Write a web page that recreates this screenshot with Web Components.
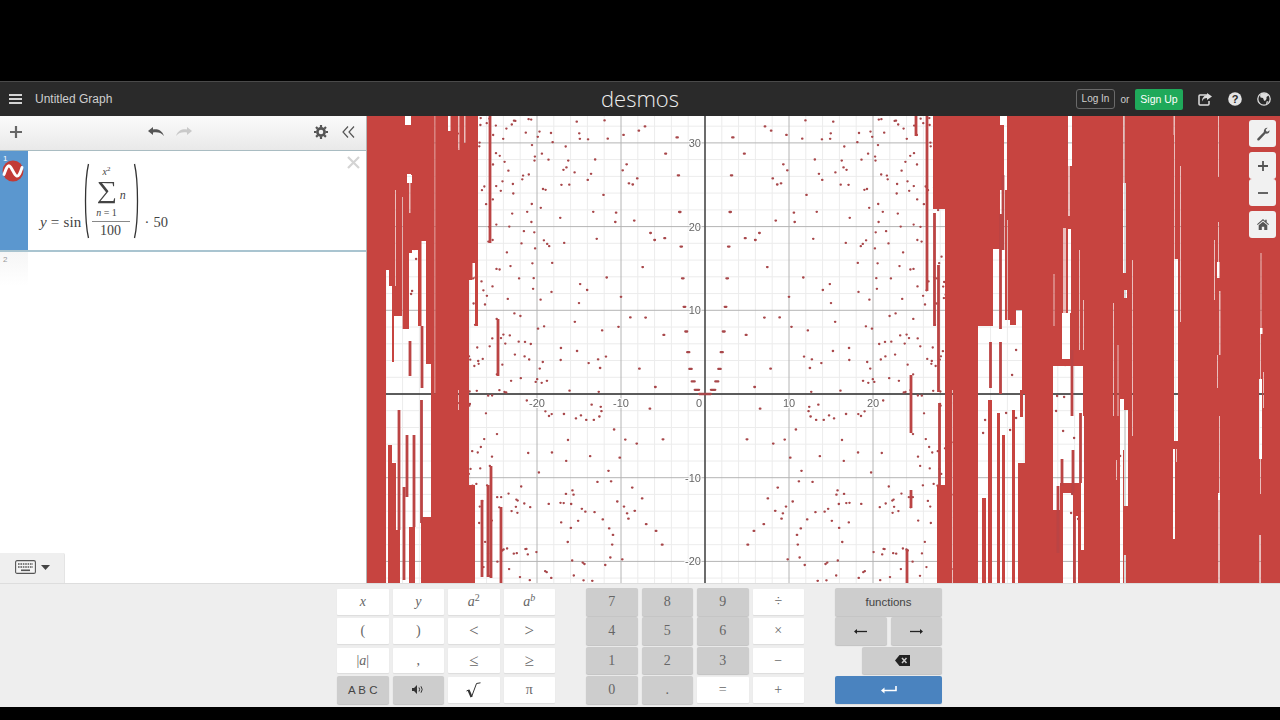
<!DOCTYPE html>
<html lang="en">
<head>
<meta charset="utf-8">
<title>Desmos | Untitled Graph</title>
<style>
  html, body { margin: 0; background: #000; height: 100%; overflow: hidden; }
</style>
</head>
<body>
<dcg-app></dcg-app>

<script>
const icons = {
  menu: '<svg width="13" height="10" viewBox="0 0 13 10"><path d="M0 1h13M0 5h13M0 9h13" stroke="#d4d4d4" stroke-width="1.800"/></svg>',
  plus: '<svg width="12" height="12" viewBox="0 0 12 12"><path d="M6 0v12M0 6h12" stroke="#666" stroke-width="2.200"/></svg>',
  undo: '<svg width="16" height="11" viewBox="0 0 16 11"><path d="M0 5l5-4v2.400c5-.6 9 1 11 6.600-3-3.400-6-4.200-11-3.600V9z" fill="currentColor"/></svg>',
  redo: '<svg width="16" height="11" viewBox="0 0 16 11"><path d="M16 5l-5-4v2.400C6 2.800 2 4.400 0 10c3-3.400 6-4.200 11-3.600V9z" fill="currentColor"/></svg>',
  gear: '<svg width="14" height="14" viewBox="0 0 14 14"><circle cx="7" cy="7" r="3.600" fill="none" stroke="#555" stroke-width="2.600"/><path d="M7 0v14M0 7h14M2 2l10 10M12 2L2 12" stroke="#555" stroke-width="2.200" stroke-dasharray="2.400 9.200 2.400"/></svg>',
  collapse: '<svg width="13" height="12" viewBox="0 0 13 12"><path d="M6 .5L1 6l5 5.500M12 .5L7 6l5 5.500" fill="none" stroke="#555" stroke-width="1.200"/></svg>',
  share: '<svg width="14" height="13" viewBox="0 0 14 13"><path d="M9 2H2q-1 0-1 1v8q0 1 1 1h8q1 0 1-1V8" fill="none" stroke="#ddd" stroke-width="1.500"/><path d="M9 0l5 3.500L9 7V5C6.500 5 5 6 4 8.500 4 5 6 2.500 9 2z" fill="#ddd"/></svg>',
  help: '<svg width="14" height="14" viewBox="0 0 14 14"><circle cx="7" cy="7" r="6.800" fill="#e4e4e4"/><text x="7" y="10.800" text-anchor="middle" font-family="Liberation Sans, sans-serif" font-weight="700" font-size="11" fill="#2a2a2a">?</text></svg>',
  globe: '<svg width="14" height="14" viewBox="0 0 14 14"><circle cx="7" cy="7" r="6.200" fill="#2a2a2a" stroke="#ddd" stroke-width="1.300"/><path d="M5 1l5 .5 1.500 2-2 1.500L9.500 7l-1.500 2-1-.5L6 6 3.500 5.500 3 3.500zM9.500 9.500l2-.5-1.500 3-1 .5z" fill="#ddd"/></svg>',
  wrench: '<svg width="14" height="14" viewBox="0 0 14 14"><path d="M13.500 3.200c.3 2.200-1.700 4-3.900 3.400L3.300 13.300c-1.100 1-2.900-.7-1.800-1.900l6.400-6.500C7.400 2.600 9.300.5 11.600.7L9.700 2.800l.5 1.500 1.500.4z" fill="#555"/></svg>',
  zoomIn: '<svg width="10" height="10" viewBox="0 0 10 10"><path d="M5 0v10M0 5h10" stroke="#555" stroke-width="1.800"/></svg>',
  zoomOut: '<svg width="10" height="10" viewBox="0 0 10 10"><path d="M0 5h10" stroke="#555" stroke-width="1.800"/></svg>',
  home: '<svg width="12" height="11" viewBox="0 0 12 11"><path d="M6 0l2.200 1.900V.8h1.500v2.400L12 5.300l-.7.700L6 1.600.7 6 0 5.300zM6 2.800l4.300 3.500V11H7.200V7.800H4.800V11H1.700V6.300z" fill="#555"/></svg>',
  speaker: '<svg width="12" height="9" viewBox="0 0 12 9"><path d="M0 3h2l3-3v9L2 6H0z" fill="#333"/><path d="M7 2.500q1.300 2 0 4M9 1.300q2.400 3.200 0 6.400" fill="none" stroke="#333" stroke-width="1"/></svg>',
  sqrt: '<svg width="15" height="16" viewBox="0 0 15 16"><path d="M.5 9l2-1 3 7L10.500 1.500 14.500 .8" fill="none" stroke="#333" stroke-width="1"/><path d="M2.500 8l3 7" stroke="#333" stroke-width="2.200"/></svg>',
  left: '<svg width="13" height="7" viewBox="0 0 13 7"><path d="M13 3.500H1" stroke="#222" stroke-width="1.300"/><path d="M0 3.500L3 1v5z" fill="#222"/></svg>',
  right: '<svg width="13" height="7" viewBox="0 0 13 7"><path d="M0 3.500h12" stroke="#222" stroke-width="1.300"/><path d="M13 3.500L10 1v5z" fill="#222"/></svg>',
  back: '<svg width="15" height="11" viewBox="0 0 15 11"><path d="M0 5.500L4.500 0H15v11H4.500z" fill="#222"/><path d="M7 3l4.500 5M11.500 3L7 8" stroke="#ccc" stroke-width="1.500"/></svg>',
  enter: '<svg width="16" height="8" viewBox="0 0 16 8"><path d="M15 0v4.500H2" fill="none" stroke="#fff" stroke-width="1.600"/><path d="M0 4.500l3.500-3v6z" fill="#fff"/></svg>',
  keyboard: '<svg width="21" height="14" viewBox="0 0 21 14"><rect x=".6" y=".6" width="19.800" height="12.800" rx="1.500" fill="#f4f4f4" stroke="#555" stroke-width="1.100"/><path d="M3 4h15M3 7h15" stroke="#555" stroke-width="1.700" stroke-dasharray="1.600 .8"/><path d="M6 10.300h9" stroke="#555" stroke-width="1.600"/></svg>',
  caret: '<svg width="9" height="5" viewBox="0 0 9 5"><path d="M0 0h9L4.500 5z" fill="#444"/></svg>',
  wave: '<svg width="22" height="22" viewBox="0 0 22 22"><circle cx="11" cy="11" r="10.500" fill="#c23b36"/><path d="M2 14.500C4 9 5.500 5 7.500 6c2.500 1.500 4.500 9 7 10 2.500 1 4-4 5.500-8.500" fill="none" stroke="#fff" stroke-width="2.900" stroke-linecap="round"/></svg>'
}

customElements.define('dcg-header', class extends HTMLElement {
  constructor () {
    super()
    this.attachShadow({ mode: 'open' }).innerHTML = `
<style>
:host {
  display: grid;
  grid-template-columns: 1fr auto 1fr;
  align-items: center;
  height: 35px;
  box-sizing: border-box;
  border-top: 1px solid #4a4a4a;
  background: #2a2a2a;
  color: #cfcfcf;
  font-family: "Liberation Sans", sans-serif;
}
.left, .right { display: flex; align-items: center; }
.left { padding-left: 9px; }
.left svg { display: block; }
.title { margin-left: 13px; font-size: 12px; }
.logo { font-family: "Open Sans", sans-serif; font-weight: 300; font-size: 22px; color: #eee; margin-top: -2px; }
.right { justify-content: flex-end; padding-right: 9px; font-size: 10px; }
.login { border: 1px solid #6a6a6a; border-radius: 3px; width: 37px; text-align: center; height: 18px; line-height: 18px; }
.or { width: 20px; text-align: center; }
.signup { background: #1fa95a; color: #fff; border-radius: 2px; width: 48px; height: 21px; line-height: 21px; text-align: center; font-size: 10.500px; }
.right svg { display: block; }
.share { margin-left: 15px; }
.help { margin-left: 16px; }
.globe { margin-left: 15px; }
</style>
<div class="left">${icons.menu}<span class="title">Untitled Graph</span></div>
<div class="logo">desmos</div>
<div class="right">
  <span class="login">Log In</span><span class="or">or</span><span class="signup">Sign Up</span>
  <span class="share">${icons.share}</span><span class="help">${icons.help}</span><span class="globe">${icons.globe}</span>
</div>`
  }
})

customElements.define('expr-toolbar', class extends HTMLElement {
  constructor () {
    super()
    this.attachShadow({ mode: 'open' }).innerHTML = `
<style>
:host {
  display: flex;
  align-items: center;
  height: 35px;
  box-sizing: border-box;
  padding: 0 11px 3px 10px;
  background: linear-gradient(#fbfbfb, #e9e9e9);
  border-bottom: 1px solid #a9bcc2;
}
svg { display: block; }
.mid { margin-left: 126px; display: flex; gap: 12px; width: 169px; color: #555; }
.mid span + span { color: #c9c9c9; }
.collapse { margin-left: 14px; }
</style>
<span>${icons.plus}</span>
<div class="mid"><span>${icons.undo}</span><span>${icons.redo}</span></div>
<span>${icons.gear}</span>
<span class="collapse">${icons.collapse}</span>`
  }
})

customElements.define('sum-fraction', class extends HTMLElement {
  constructor () {
    super()
    this.attachShadow({ mode: 'open' }).innerHTML = `
<style>
:host {
  display: inline-flex;
  align-items: flex-end;
  font-family: "Liberation Serif", serif;
  color: #444;
  font-size: 15px;
}
i { font-style: italic; }
.text { line-height: 20px; margin-bottom: 7px; letter-spacing: .2px; white-space: pre; }
.paren { display: block; }
.frac { width: 38px; display: flex; flex-direction: column; align-items: center; margin: 0 3px 0 2px; }
.num { display: flex; align-items: flex-start; border-bottom: 1px solid #888; width: 100%; justify-content: center; height: 58px; box-sizing: border-box; padding-left: 1px; }
.op { display: flex; flex-direction: column; align-items: center; }
.up { font-size: 10px; line-height: 11px; height: 11px; margin-top: 2px; }
.up sup { font-size: 7px; line-height: 0; }
.sig { font-size: 22px; line-height: 26px; height: 27px; display: block; transform: scale(1.300, 1.100); transform-origin: 50% 50%; }
.low { font-size: 10px; line-height: 12px; height: 12px; margin-top: 3px; white-space: pre; }
.n { margin: 24px 0 0 3px; font-size: 12px; line-height: 14px; }
.den { font-size: 14px; line-height: 17px; }
</style>
<span class="text"><i>y</i> = sin</span>
<svg class="paren" width="8" height="76" viewBox="0 0 8 76"><path d="M6.500 1C2.500 18 2.500 58 6.500 75" fill="none" stroke="#333" stroke-width="1.300"/></svg>
<div class="frac">
  <div class="num">
    <div class="op"><span class="up"><i>x</i><sup>2</sup></span><span class="sig">∑</span><span class="low"><i>n</i> = 1</span></div>
    <i class="n">n</i>
  </div>
  <div class="den">100</div>
</div>
<svg class="paren" width="8" height="76" viewBox="0 0 8 76"><path d="M1.500 1C5.500 18 5.500 58 1.500 75" fill="none" stroke="#333" stroke-width="1.300"/></svg>
<span class="text" style="margin-left:4px;font-size:14.500px">· 50</span>`
  }
})

customElements.define('expr-item', class extends HTMLElement {
  constructor () {
    super()
    const selected = this.hasAttribute('selected')
    this.attachShadow({ mode: 'open' }).innerHTML = `
<style>
:host { display: flex; position: relative; box-sizing: border-box; font-family: "Liberation Sans", sans-serif; }
:host([selected]) { height: 101px; border-bottom: 2px solid #a9c4d0; }
:host(:not([selected])) { height: 34px; }
.tab { width: 28px; flex: none; position: relative; background: ${selected ? '#5b97cf' : 'linear-gradient(#f6f6f6, #fff)'}; font-size: 8px; color: ${selected ? '#fff' : '#999'}; padding: 3px 0 0 3px; box-sizing: border-box; }
.tab svg { position: absolute; left: 2px; top: 9px; }
.body { flex: 1; display: flex; align-items: flex-end; padding: 0 0 11px 12px; }
.close { position: absolute; right: 6px; top: 5px; }
</style>
<div class="tab"><slot name="index"></slot>${selected ? icons.wave : ''}</div>
<div class="body"><slot></slot></div>
${selected ? '<svg class="close" width="13" height="13" viewBox="0 0 13 13"><path d="M1 1l11 11M12 1L1 12" stroke="#d4d4d4" stroke-width="2.200"/></svg>' : ''}`
  }
})

customElements.define('keyboard-toggle', class extends HTMLElement {
  constructor () {
    super()
    this.attachShadow({ mode: 'open' }).innerHTML = `
<style>
:host {
  display: flex;
  align-items: center;
  width: 65px;
  height: 30px;
  box-sizing: border-box;
  padding: 0 0 2px 15px;
  background: #efefef;
  border-right: 1px solid #e4e4e4;
  border-top-right-radius: 2px;
  gap: 5px;
}
svg { display: block; }
</style>
${icons.keyboard}${icons.caret}`
  }
})

customElements.define('expr-panel', class extends HTMLElement {
  constructor () {
    super()
    this.attachShadow({ mode: 'open' }).innerHTML = `
<style>
:host { display: flex; flex-direction: column; width: 366px; flex: none; background: #fff; border-right: 1px solid #b5b5b5; margin-right: -1px; position: relative; z-index: 1; }
.list { flex: 1; }
</style>
<expr-toolbar></expr-toolbar>
<div class="list">
  <expr-item selected><span slot="index">1</span><sum-fraction></sum-fraction></expr-item>
  <expr-item><span slot="index">2</span></expr-item>
</div>
<keyboard-toggle></keyboard-toggle>`
  }
})

customElements.define('graph-tools', class extends HTMLElement {
  constructor () {
    super()
    this.attachShadow({ mode: 'open' }).innerHTML = `
<style>
:host { position: absolute; top: 4px; right: 4px; display: flex; flex-direction: column; gap: 5px; width: 27px; }
div { background: #f1f1f1; border-radius: 3px; display: flex; align-items: center; justify-content: center; height: 27px; }
svg { display: block; }
</style>
<div>${icons.wrench}</div>
<div>${icons.zoomIn}</div>
<div style="margin-top:-5px">${icons.zoomOut}</div>
<div>${icons.home}</div>`
  }
})

// Red areas of the curve, read off the reference, as [x1, x2, y1, y2] in page pixels
const solid = [
  // left of the axis
  [366, 386, 116, 583], [386, 389, 116, 270], [389, 394, 116, 286], [392, 394, 286, 362],
  [388, 392, 445, 583], [392, 396, 463, 583], [396, 400, 530, 583],
  [394, 402, 116, 316], [402, 409, 116, 329], [409, 412, 116, 175], [409, 412, 183, 253],
  [412, 418, 116, 250], [418, 431, 116, 241], [418, 421.500, 241, 326], [426, 431, 241, 364],
  [409, 415, 527, 583], [421, 426, 517, 583], [426, 431, 517, 583],
  [431, 469, 116, 583], [469, 478, 116, 263], [469, 472.500, 263, 280], [475, 478, 263, 326], [469, 475, 485, 583],
  // right of the axis
  [933, 945, 116, 209], [945, 978, 116, 390], [953, 978, 390, 583], [945, 952, 390, 583], [952, 953, 390, 583], [937, 945, 485, 583],
  [978, 993, 116, 326], [993, 1000, 116, 249], [1000, 1004, 125, 190], [1007, 1010, 116, 190], [1005, 1010, 190, 320],
  [1010, 1016, 116, 325], [1016, 1022, 116, 310], [1022, 1025, 116, 394],
  [982, 986, 498, 583], [988, 992, 400, 583], [997, 1000, 413, 583], [1002, 1005, 435, 583],
  [1012, 1015, 410, 583], [1018, 1025, 463, 583], [1020, 1023, 390, 417],
  [1025, 1280, 116, 583]
]

// Gaps cut out of the red; the first value of each group is how much red stays
const gaps = [
  [0, [[448, 450.500, 116, 131], [405, 411, 116, 125], [407, 411, 174, 183], [1068, 1072, 116, 166], [1068, 1071, 229, 313], [1062, 1070, 313, 359],
    [1053, 1083, 366, 483], [1053, 1060, 483, 510], [1063, 1073, 493, 583], [1075, 1078, 516, 583], [1081, 1084, 416, 550],
    [1123, 1126, 183, 273], [1124, 1127, 290, 298], [1120, 1124, 399, 450], [1124, 1128, 410, 506], [1120, 1123, 450, 583], [1124, 1126, 555, 583],
    [1174, 1178, 259, 441], [1173, 1175, 449, 539], [1217, 1219.500, 262, 278], [1218, 1220, 493, 500],
    [1260, 1262.500, 328, 334], [1259, 1262, 379, 459]]],
  [0.35, [[434.500, 435.300, 116, 394], [458, 459.500, 116, 150], [464, 465.500, 116, 143], [458, 459, 390, 410], [952, 953, 390, 583],
    [395, 396, 190, 286], [402, 403, 197, 329], [409, 410.500, 183, 213], [1007, 1008, 220, 320],
    [1068, 1070, 166, 216], [1063, 1066, 228, 313], [1053.500, 1054.500, 274, 326], [1079, 1080, 250, 350], [1083, 1084, 300, 350],
    [1113, 1114, 303, 416], [1117.500, 1118.500, 345, 416], [1132, 1133, 260, 436], [1123, 1125, 116, 183], [1116, 1117, 460, 480],
    [1173.500, 1175, 116, 135], [1174, 1175, 135, 259], [1176, 1177, 449, 462], [1180, 1181, 166, 322],
    [1218, 1219, 116, 177], [1218, 1219, 222, 262], [1219, 1220.500, 291, 355], [1217, 1218, 355, 388], [1219, 1220, 416, 493], [1218, 1220, 500, 583], [1214, 1215, 240, 300],
    [1260.500, 1261.500, 253, 328], [1260, 1261, 334, 379], [1260, 1261, 459, 494], [1259, 1261, 535, 583], [1263, 1264, 372, 408]]]
]

// Bars that stand alone in the white, as [x, y1, y2] in page pixels
const spikes = [
  [490, 116, 243], [498, 319, 376], [491, 466, 578], [501, 507, 583], [488, 485, 577], [482, 500, 577],
  [927, 116, 291], [916, 116, 136], [911, 375, 433], [911, 490, 508], [907, 550, 583],
  [399, 410, 530], [404, 487, 580], [407, 435, 497], [414, 435, 527], [421.500, 400, 523], [422, 326, 388], [410, 341, 376],
  [934.500, 213, 326], [938.500, 265, 392], [939.500, 403, 485], [1000.500, 214, 329], [1003, 175, 250], [1000.500, 342, 394], [990.500, 342, 388],
  [1072, 350, 416], [1080.500, 413, 483], [1073, 450, 493], [1062, 459, 486], [1058, 486, 553], [1074.500, 516, 583]
]

const looseDots = [[1057, 396], [1064, 397], [1056, 411], [1063, 431], [1074, 438], [1058, 519], [1078, 519], [1072, 494], [1071, 513], [1063, 361], [1065, 365],
  [985, 420], [983, 433], [1016, 418], [1006, 413], [1010, 430], [1016, 350], [1012, 375], [1120, 456], [1119, 466],
  [414, 249], [416, 259], [412, 291], [404, 299], [411, 294]]

customElements.define('graph-paper', class extends HTMLElement {
  constructor () {
    super()
    const W = 914
    const H = 467
    const X0 = 339
    const Y0 = 278
    const SX = 8.4
    const SY = 8.37
    const X = (x) => X0 + x * SX
    const Y = (y) => Y0 - y * SY
    const f = (m) => 50 * Math.sin(m * (m + 1) / 200)

    let minor = ''
    let major = ''
    for (let i = -40; i <= 70; i += 2) {
      const px = X(i).toFixed(1)
      if (i % 10 === 0) major += `M${px} 0V${H}`
      else minor += `M${px} 0V${H}`
    }
    for (let j = -24; j <= 34; j += 2) {
      const py = Y(j).toFixed(1)
      if (j % 10 === 0) major += `M0 ${py}H${W}`
      else minor += `M0 ${py}H${W}`
    }

    // every integer upper bound of the sum is one flat step of the curve
    let dots = `M${X(-0.7)} ${Y0}H${X(0.7)}`
    for (let m = 1; m < 1000; m++) {
      const a = Math.sqrt(m - 0.5)
      const b = Math.sqrt(m + 0.5)
      const py = Y(f(m)).toFixed(1)
      if (py < -3 || py > H + 3) continue
      dots += `M${X(a).toFixed(1)} ${py}H${X(b).toFixed(1)}M${X(-a).toFixed(1)} ${py}H${X(-b).toFixed(1)}`
    }
    for (const [x, y] of looseDots) dots += `M${x - 366} ${y - 116}h.2`

    const rect = ([x1, x2, y1, y2]) => `M${x1 - 366} ${y1 - 116}H${x2 - 366}V${y2 - 116}H${x1 - 366}Z`
    const redPath = solid.map(rect).join('')
    const gapRects = gaps.map(([keep, list]) => {
      const v = Math.round(keep * 255)
      return `<path d="${list.map(rect).join('')}" fill="rgb(${v},${v},${v})"/>`
    }).join('')
    const spikePath = spikes.map(([x, a, b]) => `M${x - 366} ${a - 116}V${b - 116}`).join('')

    const yLabels = [30, 20, 10, -10, -20].map((v) =>
      `<text class="lab" x="${X0 - 4}" y="${Y(v) + 4}" text-anchor="end">${v}</text>`).join('')
    const xLabels = [-20, -10, 10, 20].map((v) =>
      `<text class="lab" x="${X(v)}" y="${Y0 + 13}" text-anchor="middle">${v}</text>`).join('')

    this.attachShadow({ mode: 'open' }).innerHTML = `
<style>
:host { display: block; position: relative; flex: 1; min-width: 0; background: #fff; overflow: hidden; }
svg { display: block; filter: blur(.3px); }
.lab { font: 11px "Liberation Sans", sans-serif; fill: #666; paint-order: stroke; stroke: #fff; stroke-width: 2px; }
</style>
<svg width="${W}" height="${H}" viewBox="0 0 ${W} ${H}">
  <defs><mask id="cut" maskUnits="userSpaceOnUse" x="0" y="0" width="${W}" height="${H}">
    <rect width="${W}" height="${H}" fill="#fff"/>${gapRects}
  </mask></defs>
  <path d="${minor}" stroke="#ececec" stroke-width="1" fill="none"/>
  <path d="${major}" stroke="#b4b4b4" stroke-width="1" fill="none"/>
  <path d="M${X0} 0V${H}M0 ${Y0}H${W}" stroke="#333" stroke-width="1.300" fill="none"/>
  ${yLabels}${xLabels}
  <text class="lab" x="${X0 - 3}" y="${Y0 + 13}" text-anchor="end">0</text>
  <path d="${dots}" stroke="#a8474a" stroke-width="2.300" stroke-linecap="round" fill="none"/>
  <path d="${redPath}" fill="#c74440" mask="url(#cut)"/>
  <path d="${spikePath}" stroke="#bb4444" stroke-width="2.800" fill="none"/>
</svg>
<graph-tools></graph-tools>`
  }
})

customElements.define('key-btn', class extends HTMLElement {
  constructor () {
    super()
    this.attachShadow({ mode: 'open' }).innerHTML = `
<style>
:host {
  display: flex;
  align-items: center;
  justify-content: center;
  background: #fff;
  border-radius: 1px;
  box-shadow: 0 1px 1px #dcdcdc;
  font: 14px "Liberation Serif", serif;
  color: #666;
  min-width: 0;
}
:host([gray]) { background: #cdcdcd; box-shadow: 0 1px 1px #c0c0c0; margin: -1px 0; border-radius: 2px; }
:host([blue]) { background: #4a83bf; margin: -1px 0; border-radius: 2px; }
:host([sans]) { font: 11.500px "Liberation Sans", sans-serif; color: #444; }
:host([big]) { font-size: 17px; }
</style>
<slot></slot>`
  }
})

customElements.define('key-pad', class extends HTMLElement {
  constructor () {
    super()
    const keys = (list) => list.map(([label, attr = '']) => `<key-btn ${attr}><span>${label}</span></key-btn>`).join('')
    this.attachShadow({ mode: 'open' }).innerHTML = `
<style>
:host {
  display: flex;
  justify-content: center;
  gap: 31px;
  height: 124px;
  box-sizing: border-box;
  padding: 5px 1px 5px 0;
  background: #eee;
  border-top: 1px solid #ddd;
}
.group { display: grid; grid-template-rows: repeat(4, 25.500px); row-gap: 3.900px; column-gap: 4px; }
.four { grid-template-columns: repeat(4, 51.500px); }
.two { grid-template-columns: repeat(2, 51.500px); }
.wide { grid-column: 1 / -1; }
.backspace { grid-column: 1 / -1; justify-self: end; width: 80px; }
sup { font-size: 10px; line-height: 0; vertical-align: 5px; }
svg { display: block; }
</style>
<div class="group four">
${keys([['<i>x</i>'], ['<i>y</i>'], ['<i>a</i><sup>2</sup>'], ['<i>a</i><sup><i>b</i></sup>'],
    ['('], [')'], ['&lt;', 'big'], ['&gt;', 'big'],
    ['|<i>a</i>|'], [','], ['≤', 'big'], ['≥', 'big'],
    ['A B C', 'gray sans'], [icons.speaker, 'gray'], [icons.sqrt], ['π']])}
</div>
<div class="group four">
${keys([['7', 'gray'], ['8', 'gray'], ['9', 'gray'], ['÷'],
    ['4', 'gray'], ['5', 'gray'], ['6', 'gray'], ['×'],
    ['1', 'gray'], ['2', 'gray'], ['3', 'gray'], ['−'],
    ['0', 'gray'], ['.', 'gray'], ['='], ['+']])}
</div>
<div class="group two">
  <key-btn gray sans class="wide">functions</key-btn>
  <key-btn gray>${icons.left}</key-btn><key-btn gray>${icons.right}</key-btn>
  <key-btn gray class="backspace">${icons.back}</key-btn>
  <key-btn blue class="wide">${icons.enter}</key-btn>
</div>`
  }
})

customElements.define('dcg-app', class extends HTMLElement {
  constructor () {
    super()
    this.attachShadow({ mode: 'open' }).innerHTML = `
<style>
:host { display: flex; flex-direction: column; height: 707px; padding-top: 81px; box-sizing: border-box; }
main { display: flex; height: 467px; }
</style>
<dcg-header></dcg-header>
<main><expr-panel></expr-panel><graph-paper></graph-paper></main>
<key-pad></key-pad>`
  }
})
</script>
</body>
</html>
